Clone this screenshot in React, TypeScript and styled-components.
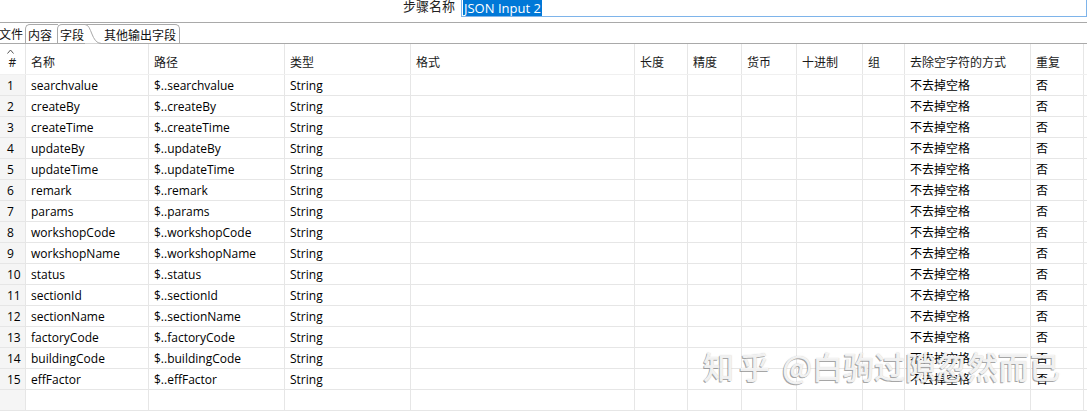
import React from "react";
import styled, { createGlobalStyle } from "styled-components";

const GlobalStyle = createGlobalStyle`
  html, body { margin: 0; padding: 0; background: #ffffff; }
  body { font-family: "Open Sans", "Noto Sans CJK SC", sans-serif; }
`;

const Page = styled.div`
  position: relative;
  width: 1087px;
  height: 411px;
  overflow: hidden;
  background: #ffffff;
  color: #000;
  font-size: 12px;
`;

const TopBar = styled.div`
  display: flex;
  align-items: flex-start;
  height: 22px;
  overflow: hidden;
  border-bottom: 1px solid #a9a9a9;
`;

const StepLabel = styled.div`
  width: 455px;
  text-align: right;
  font-size: 13px;
  line-height: 13px;
  margin-top: -1px;
  color: #222;
  font-family: "Noto Sans CJK SC", sans-serif;
`;

const StepInput = styled.div`
  margin-left: 6px;
  flex: 1;
  height: 18px;
  margin-top: -1px;
  border: 1px solid #7eb4ea;
  padding-left: 1px;
  box-sizing: border-box;
  display: flex;
  align-items: flex-start;
`;

const Selected = styled.span`
  background: #0078d7;
  color: #ffffff;
  font-size: 13px;
  line-height: 16px;
  padding: 0 1px;
`;

const TabStrip = styled.div`
  display: flex;
  align-items: flex-end;
  height: 20px;
  border-bottom: 1px solid #a9a9a9;
  font-size: 12px;
  font-family: "Noto Sans CJK SC", sans-serif;
`;

const Tab = styled.div<{ $active?: boolean; $left?: boolean; $right?: boolean }>`
  position: relative;
  flex: none;
  height: 19px;
  line-height: 19px;
  white-space: nowrap;
  box-sizing: border-box;
  background: #ffffff;
  color: #111;
  border-top: ${(p) => (p.$left || p.$right || p.$active ? "1px solid #a9a9a9" : "none")};
  border-left: ${(p) => (p.$left || p.$active ? "1px solid #a9a9a9" : "none")};
  border-right: ${(p) => (p.$right ? "1px solid #a9a9a9" : "none")};
  border-radius: ${(p) => (p.$right ? "0 5px 0 0" : p.$left || p.$active ? "5px 0 0 0" : "0")};
  z-index: ${(p) => (p.$active ? 2 : 1)};
`;

const TabText = styled.span<{ $pl: number; $pr: number }>`
  padding-left: ${(p) => p.$pl}px;
  padding-right: ${(p) => p.$pr}px;
`;

const Slope = styled.svg`
  position: absolute;
  right: -16px;
  top: -1px;
  width: 17px;
  height: 20px;
  overflow: visible;
`;

const Grid = styled.div`
  display: flex;
  flex-direction: column;
`;

const COLS = "26px 123px 136px 126px 224px 53px 54px 55px 66px 42px 126px 53px 1fr";

const HeaderRow = styled.div`
  display: grid;
  grid-template-columns: ${COLS};
  height: 31px;
  box-sizing: border-box;
  border-bottom: 1px solid #f0f0f0;
`;

const BodyRow = styled.div`
  display: grid;
  grid-template-columns: ${COLS};
  height: 21px;
  box-sizing: border-box;
  border-bottom: 1px solid #e6e6e6;
`;

const HeadCell = styled.div<{ $center?: boolean }>`
  display: flex;
  align-items: center;
  justify-content: ${(p) => (p.$center ? "center" : "flex-start")};
  padding: 6px 0 0 ${(p) => (p.$center ? 0 : 5)}px;
  box-sizing: border-box;
  border-right: 1px solid #e6e6e6;
  color: #1a1a1a;
  white-space: nowrap;
  overflow: hidden;
  position: relative;
`;

const Cell = styled.div<{ $num?: boolean }>`
  display: flex;
  align-items: center;
  padding-left: ${(p) => (p.$num ? 7 : 5)}px;
  padding-top: 1px;
  box-sizing: border-box;
  border-right: 1px solid #e6e6e6;
  background: ${(p) => (p.$num ? "#f5f5f5" : "transparent")};
  color: #000;
  white-space: nowrap;
  overflow: hidden;
  line-height: 19px;
`;

const SortCaret = styled.svg`
  position: absolute;
  left: 7px;
  top: 5px;
  width: 7px;
  height: 5px;
`;

const Watermark = styled.div`
  position: absolute;
  left: 703px;
  top: 346px;
  font-size: 31px;
  line-height: 40px;
  font-weight: 500;
  color: rgba(247, 247, 247, 0.95);
  text-shadow: -1px 1px 0 rgba(110, 110, 110, 0.6), 0 0 1px rgba(140, 140, 140, 0.5);
  font-family: "Noto Sans CJK SC", sans-serif;
  white-space: nowrap;
  pointer-events: none;
`;

const Spaced = styled.span`
  letter-spacing: 5px;
`;

const headers = ["名称", "路径", "类型", "格式", "长度", "精度", "货币", "十进制", "组", "去除空字符的方式", "重复", ""];

const fields = [
  "searchvalue",
  "createBy",
  "createTime",
  "updateBy",
  "updateTime",
  "remark",
  "params",
  "workshopCode",
  "workshopName",
  "status",
  "sectionId",
  "sectionName",
  "factoryCode",
  "buildingCode",
  "effFactor",
];

export default function App() {
  return (
    <Page>
      <GlobalStyle />
      <TopBar>
        <StepLabel>步骤名称</StepLabel>
        <StepInput>
          <Selected>JSON Input 2</Selected>
        </StepInput>
      </TopBar>
      <TabStrip>
        <Tab>
          <TabText $pl={0} $pr={0} style={{ marginLeft: -1 }}>文件</TabText>
        </Tab>
        <Tab $left style={{ marginLeft: 2, width: 33 }}>
          <TabText $pl={2} $pr={4}>内容</TabText>
        </Tab>
        <Tab $active style={{ width: 29, marginLeft: -1 }}>
          <TabText $pl={2} $pr={0}>字段</TabText>
          <Slope viewBox="0 0 17 20">
            <path d="M0 0.5 C7 0.5 6 19.5 16.5 19.5 L0 19.5 Z" fill="#ffffff" />
            <path d="M0 0.5 C7 0.5 6 19.5 16.5 19.5" fill="none" stroke="#a9a9a9" strokeWidth="1" />
          </Slope>
        </Tab>
        <Tab $right>
          <TabText $pl={18} $pr={3}>其他输出字段</TabText>
        </Tab>
      </TabStrip>
      <Grid>
        <HeaderRow>
          <HeadCell $center>
            <SortCaret viewBox="0 0 7 5">
              <polyline points="0.5,4.5 3.5,1 6.5,4.5" fill="none" stroke="#555" strokeWidth="1" />
            </SortCaret>
            #
          </HeadCell>
          {headers.map((h, i) => (
            <HeadCell key={i}>{h}</HeadCell>
          ))}
        </HeaderRow>
        {fields.map((f, i) => (
          <BodyRow key={f}>
            <Cell $num>{i + 1}</Cell>
            <Cell>{f}</Cell>
            <Cell>$..{f}</Cell>
            <Cell>String</Cell>
            <Cell />
            <Cell />
            <Cell />
            <Cell />
            <Cell />
            <Cell />
            <Cell>不去掉空格</Cell>
            <Cell>否</Cell>
            <Cell />
          </BodyRow>
        ))}
        <BodyRow>
          {Array.from({ length: 13 }).map((_, i) => (
            <Cell key={i} $num={i === 0} />
          ))}
        </BodyRow>
      </Grid>
      <Watermark>
        <Spaced>知乎</Spaced> @白驹过隙忽然而已
      </Watermark>
    </Page>
  );
}
